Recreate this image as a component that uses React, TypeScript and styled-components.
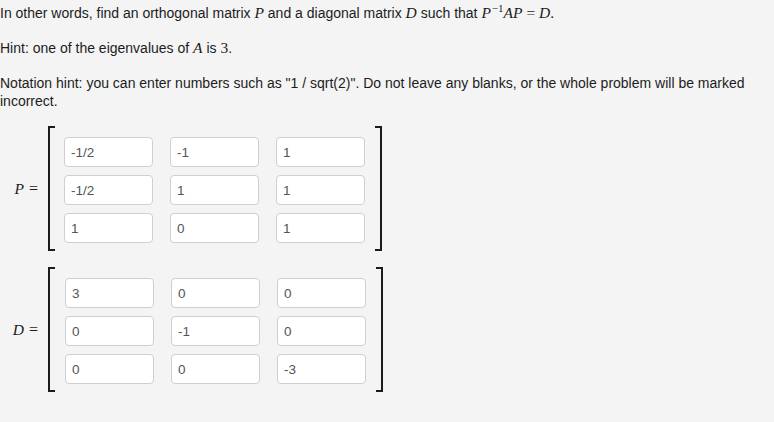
import React from "react";
import styled, { createGlobalStyle } from "styled-components";

const Global = createGlobalStyle`
  html, body {
    margin: 0;
    padding: 0;
    background: #f4f4f4;
  }
  body {
    font-family: "Liberation Sans", Arial, Helvetica, sans-serif;
    font-size: 14px;
    color: #1c1c1c;
  }
`;

const Page = styled.div`
  padding: 4px 0 0 0;
  width: 774px;
`;

const Para = styled.p`
  margin: 0 0 17px;
  line-height: 18px;
`;

const M = styled.span`
  font-family: "Liberation Serif", "Times New Roman", serif;
  font-style: italic;
  font-size: 15.5px;
`;

const Num = styled.span`
  font-family: "Liberation Serif", "Times New Roman", serif;
  font-size: 15.5px;
`;

const Sup = styled.sup`
  font-family: "Liberation Serif", "Times New Roman", serif;
  font-style: normal;
  font-size: 11px;
  vertical-align: 6px;
  line-height: 0;
  margin-left: 1px;
`;

const Matrices = styled.div`
  display: flex;
  flex-direction: column;
  gap: 16px;
  margin-top: -1px;
`;

const MatrixRow = styled.div`
  display: flex;
  align-items: stretch;
`;

const Label = styled.div`
  width: 48px;
  display: flex;
  align-items: center;
  justify-content: flex-end;
  padding-right: 10px;
  box-sizing: border-box;
  font-family: "Liberation Serif", "Times New Roman", serif;
  font-size: 16px;
  white-space: nowrap;
  gap: 5px;
`;

const Bracket = styled.div<{ $side: "left" | "right" }>`
  width: 5px;
  border-top: 2px solid #1d1a18;
  border-bottom: 2px solid #1d1a18;
  ${(p) => (p.$side === "left" ? "border-left" : "border-right")}: 2px solid #1d1a18;
`;

const Grid = styled.div<{ $ml: number }>`
  display: grid;
  grid-template-columns: repeat(3, 89px);
  column-gap: 17px;
  row-gap: 8px;
  padding: 11px 10px 8px ${(p) => p.$ml}px;
`;

const Cell = styled.input`
  box-sizing: border-box;
  width: 89px;
  height: 30px;
  margin: 0;
  padding: 0 6px;
  border: 1px solid #cfcfcf;
  border-radius: 4px;
  background: #fff;
  color: #555;
  font-family: "Liberation Sans", Arial, Helvetica, sans-serif;
  font-size: 13.5px;
  outline: none;
`;

type MatrixProps = { name: string; values: string[][]; ml: number };

const Matrix = ({ name, values, ml }: MatrixProps) => (
  <MatrixRow>
    <Label>
      <M>{name}</M>
      <span>=</span>
    </Label>
    <Bracket $side="left" />
    <Grid $ml={ml}>
      {values.flat().map((v, i) => (
        <Cell key={i} value={v} readOnly />
      ))}
    </Grid>
    <Bracket $side="right" />
  </MatrixRow>
);

export default function App() {
  return (
    <>
      <Global />
      <Page>
        <Para>
          In other words, find an orthogonal matrix <M>P</M> and a diagonal matrix <M>D</M> such that{" "}
          <M>
            P<Sup>−1</Sup>AP
          </M>{" "}
          <Num>=</Num> <M>D</M>
          <Num>.</Num>
        </Para>
        <Para>
          Hint: one of the eigenvalues of <M>A</M> is <Num>3</Num>.
        </Para>
        <Para>
          Notation hint: you can enter numbers such as "1 / sqrt(2)". Do not leave any blanks, or the whole problem
          will be marked incorrect.
        </Para>
        <Matrices>
          <Matrix
            name="P"
            ml={9}
            values={[
              ["-1/2", "-1", "1"],
              ["-1/2", "1", "1"],
              ["1", "0", "1"],
            ]}
          />
          <Matrix
            name="D"
            ml={10}
            values={[
              ["3", "0", "0"],
              ["0", "-1", "0"],
              ["0", "0", "-3"],
            ]}
          />
        </Matrices>
      </Page>
    </>
  );
}
